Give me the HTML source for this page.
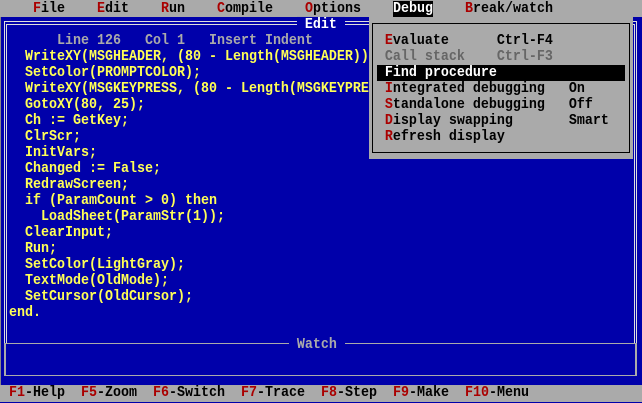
<!DOCTYPE html>
<html><head><meta charset="utf-8"><style>
*{margin:0;padding:0}
body{width:642px;height:402px;background:#0000aa;position:relative;overflow:hidden;font-family:"Liberation Mono","DejaVu Sans Mono",monospace;font-weight:bold;font-size:13.33px}
.r{position:absolute;left:1px;height:16px;line-height:16px;white-space:pre;margin-top:1px;transform:scaleY(1.1);transform-origin:50% 65%}
.a{position:absolute}
.y{color:#ffff55}.rd{color:#aa0000}.k{color:#000}.w{color:#fff}.g{color:#aaa}.d{color:#666}
</style></head><body>
<div class="a" style="left:0;top:0;width:642px;height:17px;background:#aaa"></div>
<div class="a" style="left:0;top:385px;width:642px;height:17px;background:#aaa"></div>
<div class="a" style="left:0;top:17px;width:1px;height:368px;background:#888"></div>
<div class="a" style="left:4px;top:21px;width:632px;height:1px;background:#ddd"></div>
<div class="a" style="left:6px;top:24px;width:628px;height:1px;background:#ddd"></div>
<div class="a" style="left:4px;top:21px;width:1px;height:322px;background:#ddd"></div>
<div class="a" style="left:6px;top:24px;width:1px;height:319px;background:#ddd"></div>
<div class="a" style="left:636px;top:21px;width:1px;height:322px;background:#ddd"></div>
<div class="a" style="left:634px;top:24px;width:1px;height:319px;background:#ddd"></div>
<div class="a" style="left:4px;top:343px;width:633px;height:1px;background:#aaa"></div>
<div class="a" style="left:4px;top:343px;width:2px;height:33px;background:#aaa"></div>
<div class="a" style="left:635px;top:343px;width:2px;height:33px;background:#aaa"></div>
<div class="a" style="left:4px;top:375px;width:633px;height:1px;background:#aaa"></div>

<div class="r k" style="top:1px">    <span class="rd">F</span>ile    <span class="rd">E</span>dit    <span class="rd">R</span>un    <span class="rd">C</span>ompile    <span class="rd">O</span>ptions    <span class="w" style="background:#000">Debug</span>    <span class="rd">B</span>reak/watch</div>
<div class="r w" style="top:17px">                                     <span style="background:#0000aa"> Edit </span></div>
<div class="r g" style="top:33px">       Line 126   Col 1   Insert Indent</div>
<div class="r y" style="top:49px">   WriteXY(MSGHEADER, (80 - Length(MSGHEADER)) div 2, 1, MSGHEADER);</div>
<div class="r y" style="top:65px">   SetColor(PROMPTCOLOR);</div>
<div class="r y" style="top:81px">   WriteXY(MSGKEYPRESS, (80 - Length(MSGKEYPRESS)) div 2, 25);</div>
<div class="r y" style="top:97px">   GotoXY(80, 25);</div>
<div class="r y" style="top:113px">   Ch := GetKey;</div>
<div class="r y" style="top:129px">   ClrScr;</div>
<div class="r y" style="top:145px">   InitVars;</div>
<div class="r y" style="top:161px">   Changed := False;</div>
<div class="r y" style="top:177px">   RedrawScreen;</div>
<div class="r y" style="top:193px">   if (ParamCount &gt; 0) then</div>
<div class="r y" style="top:209px">     LoadSheet(ParamStr(1));</div>
<div class="r y" style="top:225px">   ClearInput;</div>
<div class="r y" style="top:241px">   Run;</div>
<div class="r y" style="top:257px">   SetColor(LightGray);</div>
<div class="r y" style="top:273px">   TextMode(OldMode);</div>
<div class="r y" style="top:289px">   SetCursor(OldCursor);</div>
<div class="r y" style="top:305px"> end.</div>
<div class="r g" style="top:337px">                                    <span style="background:#0000aa"> Watch </span></div>
<div class="r k" style="top:385px"> <span class="rd">F1</span>-Help  <span class="rd">F5</span>-Zoom  <span class="rd">F6</span>-Switch  <span class="rd">F7</span>-Trace  <span class="rd">F8</span>-Step  <span class="rd">F9</span>-Make  <span class="rd">F10</span>-Menu</div>

<div class="a" style="left:369px;top:17px;width:264px;height:142px;background:#aaa"></div>
<div class="a" style="left:372px;top:23px;width:256px;height:128px;border:1px solid #000"></div>
<div class="a" style="left:377px;top:65px;width:248px;height:16px;background:#000"></div>
<div class="r k" style="top:33px">                                                <span class="rd">E</span>valuate      Ctrl-F4</div>
<div class="r d" style="top:49px">                                                Call stack    Ctrl-F3</div>
<div class="r w" style="top:65px">                                                Find procedure</div>
<div class="r k" style="top:81px">                                                <span class="rd">I</span>ntegrated debugging   On</div>
<div class="r k" style="top:97px">                                                <span class="rd">S</span>tandalone debugging   Off</div>
<div class="r k" style="top:113px">                                                <span class="rd">D</span>isplay swapping       Smart</div>
<div class="r k" style="top:129px">                                                <span class="rd">R</span>efresh display</div>
</body></html>
